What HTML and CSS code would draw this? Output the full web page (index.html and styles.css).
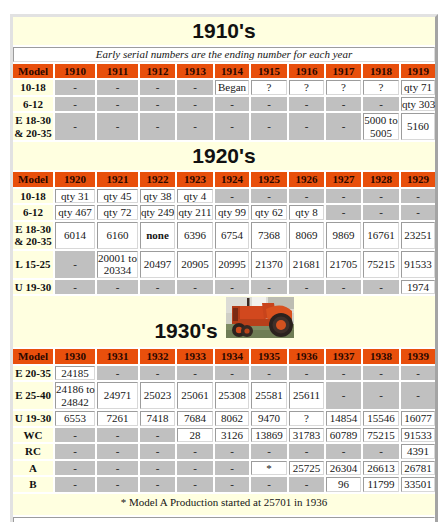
FILE: index.html
```html
<!DOCTYPE html>
<html>
<head>
<meta charset="utf-8">
<title>Serial Numbers</title>
<link rel="stylesheet" href="styles.css">
</head>
<body>
<div class="frame">
<table class="serials">
<colgroup>
<col class="c40"><col class="c40"><col class="c41"><col class="c35"><col class="c36"><col class="c34"><col class="c36"><col class="c35"><col class="c35"><col class="c36"><col class="c34">
</colgroup>
<tbody>
<tr><td class="title" colspan="11">1910's</td></tr>
<tr><td class="sub" colspan="11">Early serial numbers are the ending number for each year</td></tr>
<tr><th class="h">Model</th><th class="h">1910</th><th class="h">1911</th><th class="h">1912</th><th class="h">1913</th><th class="h">1914</th><th class="h">1915</th><th class="h">1916</th><th class="h">1917</th><th class="h">1918</th><th class="h">1919</th></tr>
<tr><td class="m">10-18</td><td class="g">-</td><td class="g">-</td><td class="g">-</td><td class="g">-</td><td class="w">Began</td><td class="w">?</td><td class="w">?</td><td class="w">?</td><td class="w">?</td><td class="w">qty 71</td></tr>
<tr><td class="m">6-12</td><td class="g">-</td><td class="g">-</td><td class="g">-</td><td class="g">-</td><td class="g">-</td><td class="g">-</td><td class="g">-</td><td class="g">-</td><td class="g">-</td><td class="w">qty 303</td></tr>
<tr><td class="m">E 18-30<br>&amp; 20-35</td><td class="g">-</td><td class="g">-</td><td class="g">-</td><td class="g">-</td><td class="g">-</td><td class="g">-</td><td class="g">-</td><td class="g">-</td><td class="w">5000 to<br>5005</td><td class="w">5160</td></tr>

<tr><td class="title" colspan="11">1920's</td></tr>
<tr><th class="h">Model</th><th class="h">1920</th><th class="h">1921</th><th class="h">1922</th><th class="h">1923</th><th class="h">1924</th><th class="h">1925</th><th class="h">1926</th><th class="h">1927</th><th class="h">1928</th><th class="h">1929</th></tr>
<tr><td class="m">10-18</td><td class="w">qty 31</td><td class="w">qty 45</td><td class="w">qty 38</td><td class="w">qty 4</td><td class="g">-</td><td class="g">-</td><td class="g">-</td><td class="g">-</td><td class="g">-</td><td class="g">-</td></tr>
<tr><td class="m">6-12</td><td class="w">qty 467</td><td class="w">qty 72</td><td class="w">qty 249</td><td class="w">qty 211</td><td class="w">qty 99</td><td class="w">qty 62</td><td class="w">qty 8</td><td class="g">-</td><td class="g">-</td><td class="g">-</td></tr>
<tr><td class="m">E 18-30<br>&amp; 20-35</td><td class="w">6014</td><td class="w">6160</td><td class="w bold">none</td><td class="w">6396</td><td class="w">6754</td><td class="w">7368</td><td class="w">8069</td><td class="w">9869</td><td class="w">16761</td><td class="w">23251</td></tr>
<tr><td class="m">L 15-25</td><td class="g">-</td><td class="w">20001 to<br>20334</td><td class="w">20497</td><td class="w">20905</td><td class="w">20995</td><td class="w">21370</td><td class="w">21681</td><td class="w">21705</td><td class="w">75215</td><td class="w">91533</td></tr>
<tr><td class="m">U 19-30</td><td class="g">-</td><td class="g">-</td><td class="g">-</td><td class="g">-</td><td class="g">-</td><td class="g">-</td><td class="g">-</td><td class="g">-</td><td class="g">-</td><td class="w">1974</td></tr>

<tr><td class="title pic" colspan="11">1930's <svg class="tractor" width="68" height="41" viewBox="0 0 68 41">
<rect width="68" height="41" fill="#cfcfc6"/>
<rect x="0" y="0" width="68" height="16" fill="#dcdcd6"/>
<rect x="26" y="0" width="14" height="17" fill="#f2f2ee"/>
<rect x="42" y="0" width="26" height="12" fill="#bcbcb2"/>
<rect x="0" y="27" width="68" height="14" fill="#7e8c62"/>
<rect x="0" y="33" width="68" height="8" fill="#6f7d55"/>
<rect x="21" y="1" width="2.5" height="11" fill="#3a2a24"/>
<path d="M6 9 L38 9 L40 25 L6 27 Z" fill="#d2481e"/>
<path d="M6 9 L14 9 L14 27 L6 27 Z" fill="#b43c18"/>
<rect x="7" y="11" width="5" height="13" fill="#7a2a14"/>
<path d="M36 6 L48 6 L50 20 L38 22 Z" fill="#c8441c"/>
<path d="M40 12 Q56 4 66 14 L66 24 L42 26 Z" fill="#d9521f"/>
<rect x="12" y="22" width="36" height="7" fill="#b8401a"/>
<circle cx="55" cy="28" r="12" fill="#2b221e"/>
<circle cx="55" cy="28" r="8.5" fill="#3f302a"/>
<circle cx="55" cy="28" r="5" fill="#d3521f"/>
<circle cx="13" cy="33" r="7" fill="#2b221e"/>
<circle cx="13" cy="33" r="3.2" fill="#cc4a1c"/>
<circle cx="21" cy="34" r="6" fill="#342822"/>
<circle cx="21" cy="34" r="2.6" fill="#b8441a"/>
</svg></td></tr>
<tr><th class="h">Model</th><th class="h">1930</th><th class="h">1931</th><th class="h">1932</th><th class="h">1933</th><th class="h">1934</th><th class="h">1935</th><th class="h">1936</th><th class="h">1937</th><th class="h">1938</th><th class="h">1939</th></tr>
<tr><td class="m">E 20-35</td><td class="w">24185</td><td class="g">-</td><td class="g">-</td><td class="g">-</td><td class="g">-</td><td class="g">-</td><td class="g">-</td><td class="g">-</td><td class="g">-</td><td class="g">-</td></tr>
<tr><td class="m">E 25-40</td><td class="w">24186 to<br>24842</td><td class="w">24971</td><td class="w">25023</td><td class="w">25061</td><td class="w">25308</td><td class="w">25581</td><td class="w">25611</td><td class="g">-</td><td class="g">-</td><td class="g">-</td></tr>
<tr><td class="m">U 19-30</td><td class="w">6553</td><td class="w">7261</td><td class="w">7418</td><td class="w">7684</td><td class="w">8062</td><td class="w">9470</td><td class="w">?</td><td class="w">14854</td><td class="w">15546</td><td class="w">16077</td></tr>
<tr><td class="m">WC</td><td class="g">-</td><td class="g">-</td><td class="g">-</td><td class="w">28</td><td class="w">3126</td><td class="w">13869</td><td class="w">31783</td><td class="w">60789</td><td class="w">75215</td><td class="w">91533</td></tr>
<tr><td class="m">RC</td><td class="g">-</td><td class="g">-</td><td class="g">-</td><td class="g">-</td><td class="g">-</td><td class="g">-</td><td class="g">-</td><td class="g">-</td><td class="g">-</td><td class="w">4391</td></tr>
<tr><td class="m">A</td><td class="g">-</td><td class="g">-</td><td class="g">-</td><td class="g">-</td><td class="g">-</td><td class="w">*</td><td class="w">25725</td><td class="w">26304</td><td class="w">26613</td><td class="w">26781</td></tr>
<tr><td class="m">B</td><td class="g">-</td><td class="g">-</td><td class="g">-</td><td class="g">-</td><td class="g">-</td><td class="g">-</td><td class="g">-</td><td class="w">96</td><td class="w">11799</td><td class="w">33501</td></tr>
<tr><td class="foot" colspan="11">* Model A Production started at 25701 in 1936</td></tr>
<tr><td class="next" colspan="11">&nbsp;</td></tr>
</tbody>
</table>
</div>
</body>
</html>
```

FILE: styles.css
```css
html, body {
  margin: 0;
  padding: 0;
  background: #ffffff;
}

.frame {
  margin: 14px 0 0 10px;
  width: 422px;
  border: 3px solid;
  border-color: #e2e2e2 #a4a4a4 #a4a4a4 #e2e2e2;
  background: #ffffff;
}

.serials {
  border-collapse: separate;
  border-spacing: 2px;
  margin: -2px;
  width: 426px;
  table-layout: fixed;
  font-family: "Liberation Serif", "Times New Roman", serif;
  font-size: 11px;
  line-height: 12.5px;
  color: #161616;
}

.c40 { width: 40px; }
.c41 { width: 41px; }
.c36 { width: 36px; }
.c35 { width: 35px; }
.c34 { width: 34px; }

.serials td,
.serials th {
  padding: 0;
  text-align: center;
  vertical-align: middle;
  white-space: nowrap;
  border: 1px solid transparent;
}

.title {
  background: #ffffe0;
  font-family: "Liberation Sans", Arial, sans-serif;
  font-size: 21px;
  font-weight: bold;
  line-height: 26px;
  color: #111111;
}

.serials .pic {
  padding-bottom: 2px;
}

.tractor {
  margin-left: 2px;
}

.serials .sub {
  background: #ffffff;
  font-style: italic;
  border-color: #9c9c9c #dcdcdc #dcdcdc #9c9c9c;
}

.serials .h {
  background: #e84f0c;
  border-color: #e84f0c;
  font-weight: bold;
  color: #2a0800;
}

.serials .m {
  background: #ffffe0;
  border-color: #ffffe0;
  font-weight: bold;
  color: #111111;
}

.serials .w {
  background: #ffffff;
  border-color: #9c9c9c #d8d8d8 #d8d8d8 #9c9c9c;
}

.serials .g {
  background: #c0c0c0;
  border-color: #c0c0c0;
}

.bold {
  font-weight: bold;
}

.serials .foot {
  background: #ffffe0;
  border-color: #ffffe0;
  padding: 1px 0 6px;
}

.serials .next {
  background: #ffffff;
  border-color: #9c9c9c #ffffff #ffffff #9c9c9c;
  height: 40px;
}
```
